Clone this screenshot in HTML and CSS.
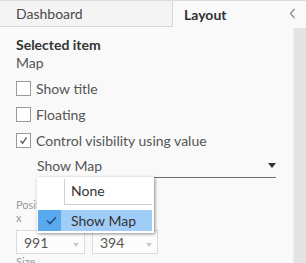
FILE: index.html
```html
<!DOCTYPE html>
<html>
<head>
<meta charset="utf-8">
<link rel="stylesheet" href="styles.css">
</head>
<body>
<div class="panel">
  <div class="tabs">
    <div class="tab tab-dash">Dashboard</div>
    <div class="tab tab-layout">Layout</div>
    <div class="collapse"><svg width="7" height="11" viewBox="0 0 7 11"><path d="M5.5 1 L1.5 5.5 L5.5 10" fill="none" stroke="#8a8a8a" stroke-width="1.2"/></svg></div>
  </div>
  <div class="body">
    <div class="content">
      <div class="heading">Selected item</div>
      <div class="item-name">Map</div>
      <div class="checks">
        <div class="check-row"><span class="box"></span><span>Show title</span></div>
        <div class="check-row"><span class="box"></span><span>Floating</span></div>
        <div class="check-row"><span class="box"><svg width="13" height="13" viewBox="0 0 13 13"><path d="M3.5 6.8 L5.6 9.2 L9.6 3.4" fill="none" stroke="#555" stroke-width="1.3"/></svg></span><span>Control visibility using value</span></div>
      </div>
      <div class="select"><span>Show Map</span><svg class="caret" width="8" height="5" viewBox="0 0 8 5"><path d="M0 0 H8 L4 5 Z" fill="#333"/></svg></div>
      <div class="label pos">Position</div>
      <div class="label xl">x</div>
      <div class="inputs">
        <div class="input"><span>991</span><svg class="spin" width="6" height="4" viewBox="0 0 6 4"><path d="M0 0 H6 L3 4 Z" fill="#c8c8c8"/></svg></div>
        <div class="input input2"><span>394</span><svg class="spin" width="6" height="4" viewBox="0 0 6 4"><path d="M0 0 H6 L3 4 Z" fill="#c8c8c8"/></svg></div>
      </div>
      <div class="label size">Size</div>
      <div class="menu">
        <div class="menu-row first"><span class="mcheck"></span><span class="mtext">None</span></div>
        <div class="menu-row selected"><span class="mcheck"><svg width="11" height="9" viewBox="0 0 11 9"><path d="M1 4.5 L4 7.5 L10 1.2" fill="none" stroke="#1f4f85" stroke-width="1.6"/></svg></span><span class="mtext">Show Map</span></div>
      </div>
    </div>
    <div class="scrollbar"></div>
  </div>
</div>
</body>
</html>
```

FILE: styles.css
```css
html, body {
  margin: 0;
  padding: 0;
  background: #f9f9f9;
}
body {
  font-family: Lato, "Open Sans", sans-serif;
  font-size: 14px;
  color: #555;
}
.panel {
  width: 306px;
  height: 263px;
  overflow: hidden;
  display: flex;
  flex-direction: column;
  border-top: 1px solid #dcdcdc;
  box-sizing: border-box;
}
.tabs {
  display: flex;
  height: 26px;
  flex: none;
}
.tab {
  display: flex;
  align-items: center;
  box-sizing: border-box;
  height: 26px;
}
.tab-dash {
  width: 173px;
  padding-left: 16px;
  background: #f4f4f4;
  border-right: 1px solid #d6d6d6;
  border-bottom: 1px solid #d6d6d6;
  color: #4a4a4a;
}
.tab-layout {
  flex: 1;
  min-width: 0;
  padding-left: 11px;
  font-weight: bold;
  color: #333;
}
.collapse {
  flex: none;
  width: 17px;
  display: flex;
  align-items: center;
  padding-bottom: 1px;
  box-sizing: border-box;
}
.body {
  flex: 1;
  display: flex;
  min-height: 0;
}
.content {
  flex: 1;
  position: relative;
  padding: 9px 0 0 16px;
}
.scrollbar {
  width: 12px;
  margin-top: 1px;
  background: #e3e3e3;
  border-left: 1px solid #efefef;
  margin-left: 2px;
}
.heading {
  font-weight: bold;
  color: #333;
  line-height: 18px;
}
.item-name {
  line-height: 18px;
}
.checks {
  margin-top: 3px;
}
.check-row {
  display: flex;
  align-items: center;
  gap: 5px;
  height: 26px;
}
.box {
  width: 13px;
  height: 13px;
  border: 1px solid #9a9a9a;
  background: #fff;
  display: flex;
}
.select {
  display: flex;
  align-items: center;
  justify-content: space-between;
  margin-left: 21px;
  margin-right: 15px;
  height: 25px;
  border-bottom: 1px solid #6e6e6e;
  box-sizing: border-box;
}
.label {
  font-size: 11px;
  color: #9a9a9a;
  line-height: 13px;
}
.pos {
  margin-top: 20px;
}
.xl {
  line-height: 14px;
}
.inputs {
  display: flex;
  gap: 7px;
  margin-top: 5px;
}
.input {
  width: 69px;
  height: 24px;
  box-sizing: border-box;
  border: 1px solid #dcdcdc;
  background: #fcfcfc;
  display: flex;
  align-items: center;
  justify-content: space-between;
  padding: 0 5px 0 7px;
}
.input2 {
  width: 66px;
}
.spin {
  margin-top: 6px;
}
.size {
  margin-top: 1px;
}
.menu {
  position: absolute;
  left: 37px;
  top: 150px;
  width: 117px;
  background: #fff;
  box-shadow: 1px 1px 3px rgba(0,0,0,0.45);
  padding: 2px 0;
}
.menu-row {
  display: flex;
  align-items: center;
}
.menu-row.first {
  height: 26px;
}
.mcheck {
  width: 28px;
  height: 100%;
  border-right: 1px solid #d0d0d0;
  display: flex;
  align-items: center;
  justify-content: center;
  box-sizing: border-box;
}
.mtext {
  flex: 1;
  height: 100%;
  display: flex;
  align-items: center;
  padding-left: 6px;
  color: #333;
  box-sizing: border-box;
}
.menu-row.first .mtext {
  margin-right: 2px;
  padding-bottom: 3px;
  border-bottom: 1px solid #d0d0d0;
}
.menu-row.selected {
  height: 21px;
  margin: 5px 2px 0 1px;
  background: #9fcdf7;
}
.menu-row.selected .mcheck {
  background: #5aa9ef;
  border-right: none;
  width: 23px;
  padding-left: 3px;
}
.menu-row.selected .mtext {
  padding-left: 10px;
}
```
